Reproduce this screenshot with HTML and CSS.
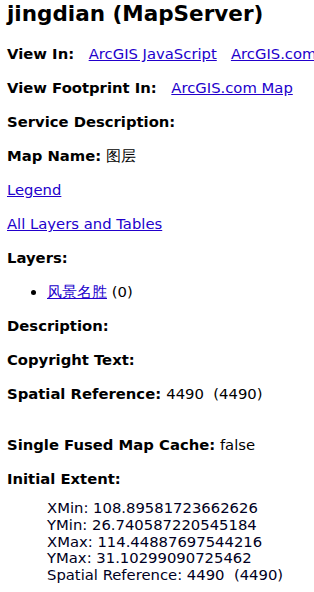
FILE: index.html
```html
<!DOCTYPE html>
<html lang="en">
<head>
    <meta charset="UTF-8">
    <title>jingdian (MapServer)</title>
    <link rel="stylesheet" href="styles.css">
</head>
<body>
    <div class="rbody">
        <h2 class="title">jingdian (MapServer)</h2>
        <p class="row"><b>View In: </b>&nbsp;&nbsp;<a href="#">ArcGIS JavaScript</a>&nbsp;&nbsp; <a href="#">ArcGIS.com Map</a></p>
        <p class="row"><b>View Footprint In: </b>&nbsp;&nbsp;<a href="#">ArcGIS.com Map</a></p>
        <p class="row"><b>Service Description: </b></p>
        <p class="row"><b>Map Name: </b>图层</p>
        <p class="row"><a href="#">Legend</a></p>
        <p class="row"><a href="#">All Layers and Tables</a></p>
        <p class="row"><b>Layers: </b></p>
        <ul class="layers">
            <li><a href="#">风景名胜</a> (0)</li>
        </ul>
        <p class="row"><b>Description: </b></p>
        <p class="row"><b>Copyright Text: </b></p>
        <p class="row"><b>Spatial Reference: </b>4490&nbsp;&nbsp;(4490)</p>
        <p class="row spaced"><b>Single Fused Map Cache:</b> false</p>
        <p class="row extent-title"><b>Initial Extent: </b></p>
        <div class="extent">
            XMin: 108.89581723662626<br>
            YMin: 26.740587220545184<br>
            XMax: 114.44887697544216<br>
            YMax: 31.10299090725462<br>
            Spatial Reference: 4490&nbsp;&nbsp;(4490)
        </div>
    </div>
</body>
</html>
```

FILE: styles.css
```css
body {
    margin: 0;
    font-family: "DejaVu Sans", Verdana, sans-serif;
    font-size: 14.8px;
    line-height: 17px;
    color: #000;
    background: #fff;
    overflow: hidden;
}

.rbody {
    padding: 1px 7px 0 7px;
    white-space: nowrap;
}

.title {
    font-size: 21.5px;
    line-height: 25px;
    margin: 0 0 19px 0;
}

a {
    color: #2200cc;
}

.row {
    margin: 17px 0;
}

.title + .row {
    margin-top: 0;
}

.layers {
    margin: 17px 0;
    padding-left: 40px;
}

.spaced {
    margin-top: 34px;
}

.extent-title {
    margin-bottom: 13px;
}

.extent {
    margin-left: 40px;
    line-height: 16.75px;
    color: #000022;
}
```
